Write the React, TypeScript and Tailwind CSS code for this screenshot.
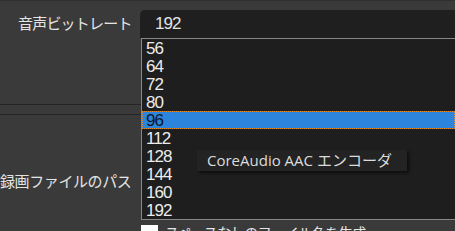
const bitrates = [56, 64, 72, 80, 96, 112, 128, 144, 160, 192];

const jp = "font-['Liberation_Sans','Noto_Sans_CJK_JP',sans-serif]";

export default function App() {
  return (
    <div className={`relative h-[231px] w-[455px] overflow-hidden bg-[#3a3a3a] text-[#e4e4e4] ${jp}`}>
      <div className="h-px bg-[#2f2f2f]" />
      <div className="mt-[9px] flex h-[28px]">
        <div className="flex w-[140px] items-center pl-[18px] text-[15px] tracking-[-0.8px]">音声ビットレート</div>
        <div className="flex flex-1 items-center rounded-tl-[5px] bg-[#1f1f1f] pl-[15px] text-[17px] tracking-[-1px]">192</div>
      </div>

      <div className="mt-[66px] h-px bg-[#252525]" />
      <div className="mt-[9px] h-px bg-[#252525]" />

      <div className="mt-[53px] flex h-[28px] items-center text-[15px] tracking-[-0.4px]">録画ファイルのパス</div>

      <div className="mt-[27px] flex items-center gap-[7px] pl-[141px]">
        <div className="h-[17px] w-[17px] shrink-0 bg-white" />
        <span className="text-[14px] tracking-[-0.5px]">スペースなしのファイル名を生成</span>
      </div>

      <div className="absolute left-[141px] right-0 top-[38px] border border-r-0 border-[#868686] bg-[#1e1e1e]">
        {bitrates.map((b) => (
          <div
            key={b}
            className={
              b === 96
                ? "flex h-[18px] items-center border border-dotted border-[#e48a2a] bg-[#2c84dc] pl-[3px] text-[17px] leading-none tracking-[-1px] text-[#0d1826]"
                : "flex h-[18px] items-center pl-[4px] text-[17px] leading-none tracking-[-1px] text-[#ececec]"
            }
          >
            {b}
          </div>
        ))}
      </div>

      <div className="absolute left-[197px] top-[150px] flex h-[21px] w-[210px] items-center bg-[#232323] pl-[10px] font-['Open_Sans','Noto_Sans_CJK_JP',sans-serif] text-[15px] text-[#dcdcdc] shadow-[2px_2px_3px_rgba(0,0,0,0.6)]">
        CoreAudio AAC エンコーダ
      </div>
    </div>
  );
}
